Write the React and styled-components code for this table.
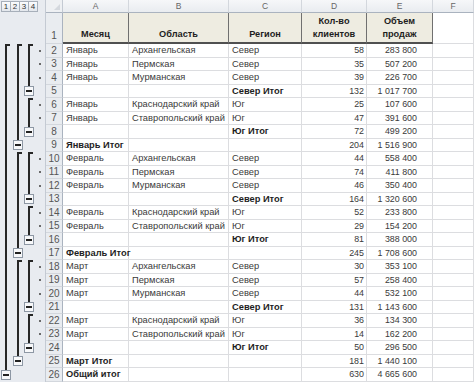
import React from "react";
import styled, { createGlobalStyle } from "styled-components";

const GlobalStyle = createGlobalStyle`
  *, *::before, *::after { box-sizing: border-box; }
  html, body { margin: 0; padding: 0; background: #fff; }
  body { font-family: "Liberation Sans", Arial, sans-serif; }
`;

// column header, header row, then 25 data rows
const ROWS = "13px 31px repeat(25, 13.5px)";

const data = [
  { n: 2, a: "Январь", b: "Архангельская", c: "Север", d: 58, e: "283 800" },
  { n: 3, a: "Январь", b: "Пермская", c: "Север", d: 35, e: "507 200" },
  { n: 4, a: "Январь", b: "Мурманская", c: "Север", d: 39, e: "226 700" },
  { n: 5, a: "", b: "", c: "Север Итог", d: 132, e: "1 017 700", total: "c" },
  { n: 6, a: "Январь", b: "Краснодарский край", c: "Юг", d: 25, e: "107 600" },
  { n: 7, a: "Январь", b: "Ставропольский край", c: "Юг", d: 47, e: "391 600" },
  { n: 8, a: "", b: "", c: "Юг Итог", d: 72, e: "499 200", total: "c" },
  { n: 9, a: "Январь Итог", b: "", c: "", d: 204, e: "1 516 900", total: "a" },
  { n: 10, a: "Февраль", b: "Архангельская", c: "Север", d: 44, e: "558 400" },
  { n: 11, a: "Февраль", b: "Пермская", c: "Север", d: 74, e: "411 800" },
  { n: 12, a: "Февраль", b: "Мурманская", c: "Север", d: 46, e: "350 400" },
  { n: 13, a: "", b: "", c: "Север Итог", d: 164, e: "1 320 600", total: "c" },
  { n: 14, a: "Февраль", b: "Краснодарский край", c: "Юг", d: 52, e: "233 800" },
  { n: 15, a: "Февраль", b: "Ставропольский край", c: "Юг", d: 29, e: "154 200" },
  { n: 16, a: "", b: "", c: "Юг Итог", d: 81, e: "388 000", total: "c" },
  { n: 17, a: "Февраль Итог", b: "", c: "", d: 245, e: "1 708 600", total: "a" },
  { n: 18, a: "Март", b: "Архангельская", c: "Север", d: 30, e: "353 100" },
  { n: 19, a: "Март", b: "Пермская", c: "Север", d: 57, e: "258 400" },
  { n: 20, a: "Март", b: "Мурманская", c: "Север", d: 44, e: "532 100" },
  { n: 21, a: "", b: "", c: "Север Итог", d: 131, e: "1 143 600", total: "c" },
  { n: 22, a: "Март", b: "Краснодарский край", c: "Юг", d: 36, e: "134 300" },
  { n: 23, a: "Март", b: "Ставропольский край", c: "Юг", d: 14, e: "162 200" },
  { n: 24, a: "", b: "", c: "Юг Итог", d: 50, e: "296 500", total: "c" },
  { n: 25, a: "Март Итог", b: "", c: "", d: 181, e: "1 440 100", total: "a" },
  { n: 26, a: "Общий итог", b: "", c: "", d: 630, e: "4 665 600", total: "a" },
];

const groups = [
  { level: 1, from: 2, to: 26 },
  { level: 2, from: 2, to: 9 },
  { level: 2, from: 10, to: 17 },
  { level: 2, from: 18, to: 25 },
  { level: 3, from: 2, to: 5 },
  { level: 3, from: 6, to: 8 },
  { level: 3, from: 10, to: 13 },
  { level: 3, from: 14, to: 16 },
  { level: 3, from: 18, to: 21 },
  { level: 3, from: 22, to: 24 },
];

const Window = styled.div`
  display: flex;
  width: 474px;
  height: 382px;
  overflow: hidden;
  background: #fff;
  color: #3a3a3a;
`;

const Outline = styled.div`
  flex: 0 0 46px;
  display: grid;
  grid-template-columns: 12px 11px 11px 11px;
  grid-template-rows: ${ROWS};
  background: #e8ebf0;
  border-right: 1px solid #c4cad3;
`;

const LevelBar = styled.div`
  grid-column: 1 / -1;
  grid-row: 1;
  display: flex;
  align-items: center;
  padding-left: 1px;
`;

const LevelButton = styled.span`
  width: 10px;
  height: 11px;
  margin-right: -1px;
  display: flex;
  align-items: center;
  justify-content: center;
  border: 1px solid #a7afba;
  background: linear-gradient(#fbfcfd, #e3e7ed);
  font-size: 8px;
  color: #333;
`;

const Bracket = styled.div`
  grid-column: ${(p) => p.$level};
  grid-row: ${(p) => p.$from + 1} / ${(p) => p.$to + 2};
  display: flex;
  flex-direction: column;
  align-items: center;
`;

const BracketLine = styled.div`
  flex: 1;
  align-self: flex-start;
  margin-left: calc(50% - 1px);
  width: 5px;
  border-left: 2px solid #262626;
  border-top: 2px solid #262626;
`;

const MinusBox = styled.div`
  flex: none;
  width: 10px;
  height: 10px;
  margin-bottom: 2px;
  display: flex;
  align-items: center;
  justify-content: center;
  border: 1px solid #8d97a4;
  background: #f7f8fa;

  &::after {
    content: "";
    width: 6px;
    height: 2px;
    background: #222;
  }
`;

const Dot = styled.span`
  grid-column: 4;
  grid-row: ${(p) => p.$row + 1};
  align-self: center;
  justify-self: center;
  width: 2px;
  height: 2px;
  background: #6a6a6a;
`;

const Grid = styled.div`
  flex: 1;
  display: grid;
  grid-template-columns: 17px 66px 100px 73px 65px 66px 41px;
  grid-template-rows: ${ROWS};
`;

const Corner = styled.div`
  position: relative;
  background: #eef0f3;
  border-right: 1px solid #c4cad3;
  border-bottom: 1px solid #aab3bf;

  &::after {
    content: "";
    position: absolute;
    right: 2px;
    bottom: 2px;
    border-style: solid;
    border-width: 0 0 6px 6px;
    border-color: transparent transparent #d4d8de transparent;
  }
`;

const ColHead = styled.div`
  display: flex;
  align-items: center;
  justify-content: center;
  background: linear-gradient(#f6f7f9, #e9ecf0);
  border-right: 1px solid #d3d7dd;
  border-bottom: 1px solid #aab3bf;
  font-size: 8.5px;
  color: #666;
`;

const RowHead = styled.div`
  display: flex;
  align-items: ${(p) => (p.$tall ? "flex-end" : "center")};
  justify-content: center;
  padding-bottom: ${(p) => (p.$tall ? "2px" : "0")};
  background: #e9ecf0;
  border-right: 1px solid #aab3bf;
  border-bottom: 1px solid #d3d7dd;
  font-size: 10px;
  color: #555;
`;

const Cell = styled.div`
  display: flex;
  align-items: center;
  justify-content: ${(p) => (p.$num ? "flex-end" : "flex-start")};
  padding: 0 ${(p) => p.$padRight || 2}px 0 3px;
  border-right: 1px solid #dcdde0;
  border-bottom: 1px solid #dcdde0;
  font-size: ${(p) => (p.$num ? "8.9px" : "9.3px")};
  font-weight: ${(p) => (p.$bold ? 700 : 400)};
  color: ${(p) => (p.$bold ? "#1e1e1e" : "#3a3a3a")};
  white-space: nowrap;
`;

const HeadCell = styled.div`
  display: flex;
  align-items: flex-end;
  justify-content: center;
  padding-bottom: 1px;
  background: #eeece1;
  border-right: 1px solid #707070;
  border-bottom: 2px solid #505050;
  font-size: 9.2px;
  font-weight: 700;
  line-height: 13px;
  text-align: center;
  color: #1e1e1e;
`;

const levels = [1, 2, 3, 4];
const letters = ["A", "B", "C", "D", "E", "F"];

export default function App() {
  return (
    <>
      <GlobalStyle />
      <Window>
        <Outline>
          <LevelBar>
            {levels.map((l) => (
              <LevelButton key={l}>{l}</LevelButton>
            ))}
          </LevelBar>
          {groups.map((g, i) => (
            <Bracket key={i} $level={g.level} $from={g.from} $to={g.to}>
              <BracketLine />
              <MinusBox />
            </Bracket>
          ))}
          {data
            .filter((r) => !r.total)
            .map((r) => (
              <Dot key={r.n} $row={r.n} />
            ))}
        </Outline>

        <Grid>
          <Corner />
          {letters.map((l) => (
            <ColHead key={l}>{l}</ColHead>
          ))}

          <RowHead $tall>1</RowHead>
          <HeadCell>Месяц</HeadCell>
          <HeadCell>Область</HeadCell>
          <HeadCell>Регион</HeadCell>
          <HeadCell>
            Кол-во
            <br />
            клиентов
          </HeadCell>
          <HeadCell>
            Объем
            <br />
            продаж
          </HeadCell>
          <Cell />

          {data.map((r) => (
            <React.Fragment key={r.n}>
              <RowHead>{r.n}</RowHead>
              <Cell $bold={r.total === "a"}>{r.a}</Cell>
              <Cell>{r.b}</Cell>
              <Cell $bold={r.total === "c"}>{r.c}</Cell>
              <Cell $num>{r.d}</Cell>
              <Cell $num $padRight={15}>
                {r.e.replace(/ /g, "\u00a0")}
              </Cell>
              <Cell />
            </React.Fragment>
          ))}
        </Grid>
      </Window>
    </>
  );
}
